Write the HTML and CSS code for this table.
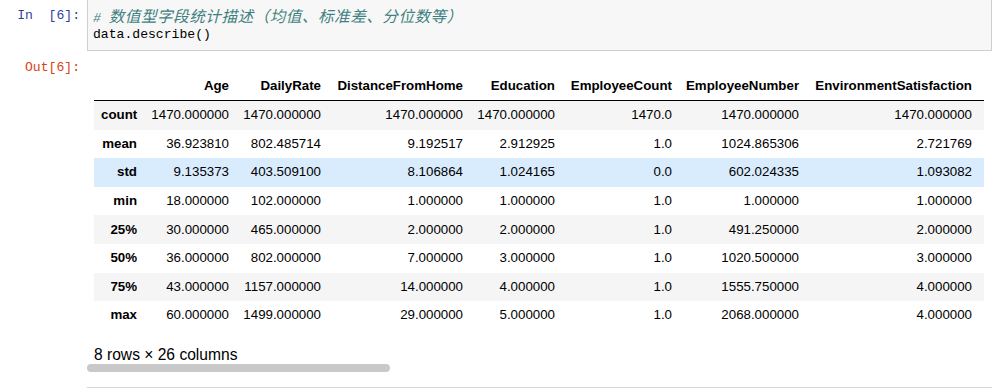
FILE: index.html
```html
<!DOCTYPE html>
<html>
<head>
<meta charset="utf-8">
<link rel="stylesheet" href="styles.css">
</head>
<body>
<div class="nb">
  <div class="cell-in">
    <div class="prompt in-prompt">In&nbsp;&nbsp;[6]:</div>
    <div class="code-box">
      <div class="code-line comment"># <span class="cjk">数值型字段统计描述（均值、标准差、分位数等）</span></div>
      <div class="code-line">data.describe()</div>
    </div>
  </div>
  <div class="cell-out">
    <div class="prompt out-prompt">Out[6]:</div>
    <div class="out-area">
      <table class="df">
        <colgroup>
          <col class="c-idx"><col class="c-num"><col class="c-num"><col class="c-dist"><col class="c-num"><col class="c-ec"><col class="c-en"><col class="c-env">
        </colgroup>
        <thead>
          <tr><th></th><th>Age</th><th>DailyRate</th><th>DistanceFromHome</th><th>Education</th><th>EmployeeCount</th><th>EmployeeNumber</th><th>EnvironmentSatisfaction</th></tr>
        </thead>
        <tbody>
          <tr class="odd"><th>count</th><td>1470.000000</td><td>1470.000000</td><td>1470.000000</td><td>1470.000000</td><td>1470.0</td><td>1470.000000</td><td>1470.000000</td></tr>
          <tr><th>mean</th><td>36.923810</td><td>802.485714</td><td>9.192517</td><td>2.912925</td><td>1.0</td><td>1024.865306</td><td>2.721769</td></tr>
          <tr class="hover"><th>std</th><td>9.135373</td><td>403.509100</td><td>8.106864</td><td>1.024165</td><td>0.0</td><td>602.024335</td><td>1.093082</td></tr>
          <tr><th>min</th><td>18.000000</td><td>102.000000</td><td>1.000000</td><td>1.000000</td><td>1.0</td><td>1.000000</td><td>1.000000</td></tr>
          <tr class="odd"><th>25%</th><td>30.000000</td><td>465.000000</td><td>2.000000</td><td>2.000000</td><td>1.0</td><td>491.250000</td><td>2.000000</td></tr>
          <tr><th>50%</th><td>36.000000</td><td>802.000000</td><td>7.000000</td><td>3.000000</td><td>1.0</td><td>1020.500000</td><td>3.000000</td></tr>
          <tr class="odd"><th>75%</th><td>43.000000</td><td>1157.000000</td><td>14.000000</td><td>4.000000</td><td>1.0</td><td>1555.750000</td><td>4.000000</td></tr>
          <tr><th>max</th><td>60.000000</td><td>1499.000000</td><td>29.000000</td><td>5.000000</td><td>1.0</td><td>2068.000000</td><td>4.000000</td></tr>
        </tbody>
      </table>
      <p class="shape">8 rows × 26 columns</p>
      <div class="scroll-thumb"></div>
    </div>
  </div>
  <div class="next-cell"></div>
</div>
</body>
</html>
```

FILE: styles.css
```css
html, body {
  margin: 0;
  padding: 0;
  background: #ffffff;
}

.nb {
  width: 994px;
  overflow: hidden;
}

.prompt {
  width: 80px;
  flex: 0 0 80px;
  padding-right: 7px;
  text-align: right;
  font-family: "Liberation Mono", monospace;
  font-size: 13.1px;
  line-height: 19px;
}

.in-prompt {
  color: #303f9f;
  padding-top: 12px;
}

.out-prompt {
  color: #d84315;
}

.cell-in {
  display: flex;
  margin-top: -6px;
}

.code-box {
  width: 905px;
  flex: 0 0 905px;
  background: #f7f7f7;
  border: 1px solid #cfcfcf;
  padding: 11px 5px 6px 5px;
  box-sizing: border-box;
  height: 57px;
}

.code-line {
  font-family: "Liberation Mono", monospace;
  font-size: 13.1px;
  line-height: 19px;
  height: 19px;
  color: #000;
  white-space: pre;
}

.comment {
  color: #408080;
  font-style: italic;
}

.cjk {
  font-family: "Noto Sans CJK SC", sans-serif;
  font-size: 15.6px;
  line-height: 19px;
  letter-spacing: 0.5px;
}

.cell-out {
  display: flex;
  margin-top: 7px;
}

.out-area {
  flex: 1;
  padding-top: 13.4px;
}

.df {
  margin-left: 7px;
  border-collapse: collapse;
  border-spacing: 0;
  table-layout: fixed;
  width: 890px;
  font-family: "Liberation Sans", Arial, sans-serif;
  font-size: 13.3px;
  color: #000;
}

.c-idx { width: 50px; }
.c-num { width: 92px; }
.c-dist { width: 142px; }
.c-ec { width: 117px; }
.c-en { width: 127px; }
.c-env { width: 178px; }

.df th, .df td {
  text-align: right;
  padding: 0 7px;
  height: 28.6px;
  line-height: 16px;
  white-space: nowrap;
  vertical-align: middle;
}

.df th:last-child, .df td:last-child {
  padding-right: 12px;
}

.df th {
  font-weight: bold;
}

.df thead tr {
  border-bottom: 1px solid #000;
}

.df thead th {
  height: 28.6px;
}

.df tr.odd {
  background: #f5f5f5;
}

.df tr.hover {
  background: #d9ecfd;
}

.shape {
  margin: 16px 0 0 7px;
  font-family: "Liberation Sans", Arial, sans-serif;
  font-size: 15.6px;
  line-height: 18px;
  color: #000;
}

.scroll-thumb {
  width: 303px;
  height: 8px;
  border-radius: 4px;
  background: #c9c9c9;
}

.next-cell {
  margin: 15px 0 0 87px;
  width: 905px;
  border-top: 1px solid #d6d6d6;
  height: 10px;
}
```
